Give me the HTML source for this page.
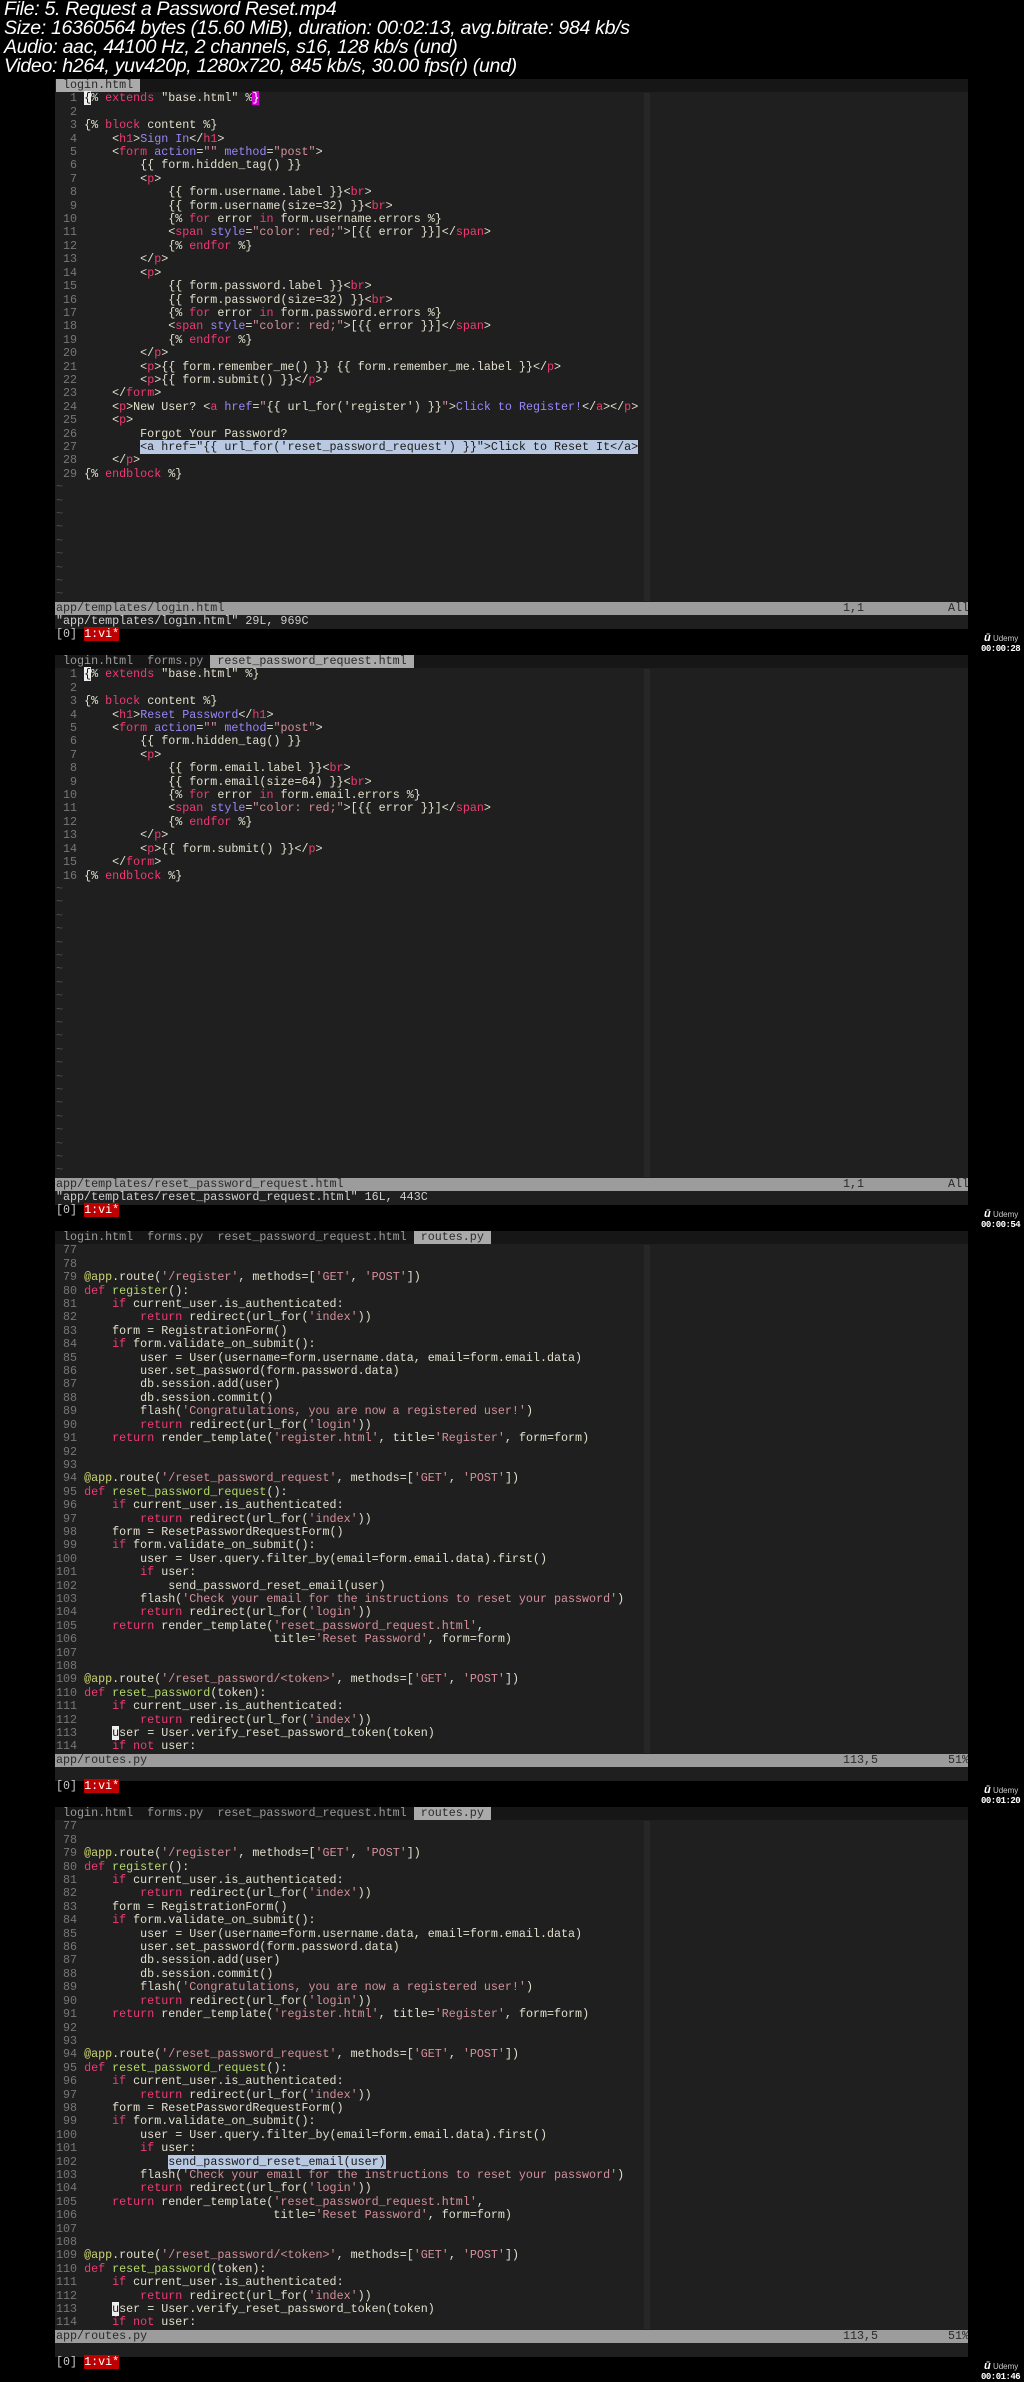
<!DOCTYPE html>
<html><head><meta charset="utf-8">
<style>
*{margin:0;padding:0;box-sizing:border-box}
body{width:1024px;height:2380px;background:#000;overflow:hidden;position:relative;font-family:"Liberation Mono",monospace}
.hdr{position:absolute;left:4px;top:0;color:#fff;font-family:"Liberation Sans",sans-serif;font-style:italic;font-size:19.5px;line-height:19px;letter-spacing:-0.3px}
.fr{position:absolute;left:0;width:1024px;height:576px}
.term{position:absolute;left:55px;top:3px;width:913px;height:550px;background:#1f1f1f;overflow:hidden}
.bar{position:absolute;left:589px;top:14px;width:6px;height:508px;background:#272727}
pre{position:absolute;left:1px;top:0;font-family:"Liberation Mono",monospace;font-size:11.7px;line-height:13.4px;color:#e2e0cc;white-space:pre}
.tabrow{position:absolute;left:0;top:0;width:913px;height:13.4px;background:#161616}
.st{position:absolute;left:0;top:522.6px;width:913px;height:13.4px;background:#9c9c9c}
.sr{position:absolute;top:522.6px;font-size:11.7px;line-height:13.4px;color:#2a2a2a;white-space:pre}
.ti{color:#9a9a9a}.ta{background:#aaa;color:#2a2a2a}
.l{color:#777}.k{color:#f03a74}.a{color:#9b86f8}.s{color:#d4909c}.g{color:#b4d86a}.y{color:#cdd470}.t{color:#4e4e4e}
.sttx{color:#2a2a2a}.msg{color:#d0d0d0}
.cur{background:#eee;color:#111}.mb{background:#d000d0;color:#fff}.hl{background:#b9c9e2;color:#1a1a1a}
.tm{position:absolute;left:56px;top:552px;font-size:11.7px;line-height:13.4px;color:#ccc}
.tm b{background:#c00000;color:#fff;font-weight:normal}
.ts{position:absolute;left:981px;top:568px;color:#fff;font-size:9px;font-weight:bold;font-family:"Liberation Mono",monospace;letter-spacing:-0.5px}
.ud{position:absolute;left:984px;top:556px;color:#ccc;font-size:8px;font-family:"Liberation Sans",sans-serif}
.ud i{font-size:11px;color:#fff;font-weight:bold}
</style></head><body>
<div class="hdr">File: 5. Request a Password Reset.mp4<br>Size: 16360564 bytes (15.60 MiB), duration: 00:02:13, avg.bitrate: 984 kb/s<br>Audio: aac, 44100 Hz, 2 channels, s16, 128 kb/s (und)<br>Video: h264, yuv420p, 1280x720, 845 kb/s, 30.00 fps(r) (und)</div>

<!-- FRAME 1 -->
<div class="fr" style="top:76px">
<div class="term"><div class="tabrow"></div><div class="bar"></div><div class="st"></div>
<div class="sr" style="left:788px">1,1</div><div class="sr" style="left:893px">All</div>
<pre><span class="ta"> login.html </span>
<span class="l">  1 </span><span class="cur">{</span>% <span class="k">extends</span> "base.html" %<span class="mb">}</span>
<span class="l">  2 </span>
<span class="l">  3 </span>{% <span class="k">block</span> content %}
<span class="l">  4 </span>    &lt;<span class="k">h1</span>&gt;<span class="a">Sign In</span>&lt;/<span class="k">h1</span>&gt;
<span class="l">  5 </span>    &lt;<span class="k">form</span> <span class="a">action</span>=<span class="s">""</span> <span class="a">method</span>=<span class="s">"post"</span>&gt;
<span class="l">  6 </span>        {{ form.hidden_tag() }}
<span class="l">  7 </span>        &lt;<span class="k">p</span>&gt;
<span class="l">  8 </span>            {{ form.username.label }}&lt;<span class="k">br</span>&gt;
<span class="l">  9 </span>            {{ form.username(size=32) }}&lt;<span class="k">br</span>&gt;
<span class="l"> 10 </span>            {% <span class="k">for</span> error <span class="k">in</span> form.username.errors %}
<span class="l"> 11 </span>            &lt;<span class="k">span</span> <span class="a">style</span>=<span class="s">"color: red;"</span>&gt;[{{ error }}]&lt;/<span class="k">span</span>&gt;
<span class="l"> 12 </span>            {% <span class="k">endfor</span> %}
<span class="l"> 13 </span>        &lt;/<span class="k">p</span>&gt;
<span class="l"> 14 </span>        &lt;<span class="k">p</span>&gt;
<span class="l"> 15 </span>            {{ form.password.label }}&lt;<span class="k">br</span>&gt;
<span class="l"> 16 </span>            {{ form.password(size=32) }}&lt;<span class="k">br</span>&gt;
<span class="l"> 17 </span>            {% <span class="k">for</span> error <span class="k">in</span> form.password.errors %}
<span class="l"> 18 </span>            &lt;<span class="k">span</span> <span class="a">style</span>=<span class="s">"color: red;"</span>&gt;[{{ error }}]&lt;/<span class="k">span</span>&gt;
<span class="l"> 19 </span>            {% <span class="k">endfor</span> %}
<span class="l"> 20 </span>        &lt;/<span class="k">p</span>&gt;
<span class="l"> 21 </span>        &lt;<span class="k">p</span>&gt;{{ form.remember_me() }} {{ form.remember_me.label }}&lt;/<span class="k">p</span>&gt;
<span class="l"> 22 </span>        &lt;<span class="k">p</span>&gt;{{ form.submit() }}&lt;/<span class="k">p</span>&gt;
<span class="l"> 23 </span>    &lt;/<span class="k">form</span>&gt;
<span class="l"> 24 </span>    &lt;<span class="k">p</span>&gt;New User? &lt;<span class="k">a</span> <span class="a">href</span>=<span class="s">"</span>{{ url_for('register') }}<span class="s">"</span>&gt;<span class="a">Click to Register!</span>&lt;/<span class="k">a</span>&gt;&lt;/<span class="k">p</span>&gt;
<span class="l"> 25 </span>    &lt;<span class="k">p</span>&gt;
<span class="l"> 26 </span>        Forgot Your Password?
<span class="l"> 27 </span>        <span class="hl">&lt;a href="{{ url_for('reset_password_request') }}"&gt;Click to Reset It&lt;/a&gt;</span>
<span class="l"> 28 </span>    &lt;/<span class="k">p</span>&gt;
<span class="l"> 29 </span>{% <span class="k">endblock</span> %}
<span class="t">~</span>
<span class="t">~</span>
<span class="t">~</span>
<span class="t">~</span>
<span class="t">~</span>
<span class="t">~</span>
<span class="t">~</span>
<span class="t">~</span>
<span class="t">~</span>
<span class="sttx">app/templates/login.html</span>
<span class="msg">"app/templates/login.html" 29L, 969C</span></pre></div>
<div class="tm">[0] <b>1:vi*</b></div>
<div class="ud"><i>ū</i> Udemy</div><div class="ts">00:00:28</div>
</div>

<!-- FRAME 2 -->
<div class="fr" style="top:652px">
<div class="term"><div class="tabrow"></div><div class="bar"></div><div class="st"></div>
<div class="sr" style="left:788px">1,1</div><div class="sr" style="left:893px">All</div>
<pre><span class="ti"> login.html  forms.py </span><span class="ta"> reset_password_request.html </span>
<span class="l">  1 </span><span class="cur">{</span>% <span class="k">extends</span> "base.html" %}
<span class="l">  2 </span>
<span class="l">  3 </span>{% <span class="k">block</span> content %}
<span class="l">  4 </span>    &lt;<span class="k">h1</span>&gt;<span class="a">Reset Password</span>&lt;/<span class="k">h1</span>&gt;
<span class="l">  5 </span>    &lt;<span class="k">form</span> <span class="a">action</span>=<span class="s">""</span> <span class="a">method</span>=<span class="s">"post"</span>&gt;
<span class="l">  6 </span>        {{ form.hidden_tag() }}
<span class="l">  7 </span>        &lt;<span class="k">p</span>&gt;
<span class="l">  8 </span>            {{ form.email.label }}&lt;<span class="k">br</span>&gt;
<span class="l">  9 </span>            {{ form.email(size=64) }}&lt;<span class="k">br</span>&gt;
<span class="l"> 10 </span>            {% <span class="k">for</span> error <span class="k">in</span> form.email.errors %}
<span class="l"> 11 </span>            &lt;<span class="k">span</span> <span class="a">style</span>=<span class="s">"color: red;"</span>&gt;[{{ error }}]&lt;/<span class="k">span</span>&gt;
<span class="l"> 12 </span>            {% <span class="k">endfor</span> %}
<span class="l"> 13 </span>        &lt;/<span class="k">p</span>&gt;
<span class="l"> 14 </span>        &lt;<span class="k">p</span>&gt;{{ form.submit() }}&lt;/<span class="k">p</span>&gt;
<span class="l"> 15 </span>    &lt;/<span class="k">form</span>&gt;
<span class="l"> 16 </span>{% <span class="k">endblock</span> %}
<span class="t">~</span>
<span class="t">~</span>
<span class="t">~</span>
<span class="t">~</span>
<span class="t">~</span>
<span class="t">~</span>
<span class="t">~</span>
<span class="t">~</span>
<span class="t">~</span>
<span class="t">~</span>
<span class="t">~</span>
<span class="t">~</span>
<span class="t">~</span>
<span class="t">~</span>
<span class="t">~</span>
<span class="t">~</span>
<span class="t">~</span>
<span class="t">~</span>
<span class="t">~</span>
<span class="t">~</span>
<span class="t">~</span>
<span class="t">~</span>
<span class="sttx">app/templates/reset_password_request.html</span>
<span class="msg">"app/templates/reset_password_request.html" 16L, 443C</span></pre></div>
<div class="tm">[0] <b>1:vi*</b></div>
<div class="ud"><i>ū</i> Udemy</div><div class="ts">00:00:54</div>
</div>

<!-- FRAME 3 -->
<div class="fr" style="top:1228px">
<div class="term"><div class="tabrow"></div><div class="bar"></div><div class="st"></div>
<div class="sr" style="left:788px">113,5</div><div class="sr" style="left:893px">51%</div>
<pre><span class="ti"> login.html  forms.py  reset_password_request.html </span><span class="ta"> routes.py </span>
<span class="l"> 77 </span>
<span class="l"> 78 </span>
<span class="l"> 79 </span><span class="y">@app</span>.route(<span class="s">'/register'</span>, methods=[<span class="s">'GET'</span>, <span class="s">'POST'</span>])
<span class="l"> 80 </span><span class="k">def</span> <span class="g">register</span>():
<span class="l"> 81 </span>    <span class="k">if</span> current_user.is_authenticated:
<span class="l"> 82 </span>        <span class="k">return</span> redirect(url_for(<span class="s">'index'</span>))
<span class="l"> 83 </span>    form = RegistrationForm()
<span class="l"> 84 </span>    <span class="k">if</span> form.validate_on_submit():
<span class="l"> 85 </span>        user = User(username=form.username.data, email=form.email.data)
<span class="l"> 86 </span>        user.set_password(form.password.data)
<span class="l"> 87 </span>        db.session.add(user)
<span class="l"> 88 </span>        db.session.commit()
<span class="l"> 89 </span>        flash(<span class="s">'Congratulations, you are now a registered user!'</span>)
<span class="l"> 90 </span>        <span class="k">return</span> redirect(url_for(<span class="s">'login'</span>))
<span class="l"> 91 </span>    <span class="k">return</span> render_template(<span class="s">'register.html'</span>, title=<span class="s">'Register'</span>, form=form)
<span class="l"> 92 </span>
<span class="l"> 93 </span>
<span class="l"> 94 </span><span class="y">@app</span>.route(<span class="s">'/reset_password_request'</span>, methods=[<span class="s">'GET'</span>, <span class="s">'POST'</span>])
<span class="l"> 95 </span><span class="k">def</span> <span class="g">reset_password_request</span>():
<span class="l"> 96 </span>    <span class="k">if</span> current_user.is_authenticated:
<span class="l"> 97 </span>        <span class="k">return</span> redirect(url_for(<span class="s">'index'</span>))
<span class="l"> 98 </span>    form = ResetPasswordRequestForm()
<span class="l"> 99 </span>    <span class="k">if</span> form.validate_on_submit():
<span class="l">100 </span>        user = User.query.filter_by(email=form.email.data).first()
<span class="l">101 </span>        <span class="k">if</span> user:
<span class="l">102 </span>            send_password_reset_email(user)
<span class="l">103 </span>        flash(<span class="s">'Check your email for the instructions to reset your password'</span>)
<span class="l">104 </span>        <span class="k">return</span> redirect(url_for(<span class="s">'login'</span>))
<span class="l">105 </span>    <span class="k">return</span> render_template(<span class="s">'reset_password_request.html'</span>,
<span class="l">106 </span>                           title=<span class="s">'Reset Password'</span>, form=form)
<span class="l">107 </span>
<span class="l">108 </span>
<span class="l">109 </span><span class="y">@app</span>.route(<span class="s">'/reset_password/&lt;token&gt;'</span>, methods=[<span class="s">'GET'</span>, <span class="s">'POST'</span>])
<span class="l">110 </span><span class="k">def</span> <span class="g">reset_password</span>(token):
<span class="l">111 </span>    <span class="k">if</span> current_user.is_authenticated:
<span class="l">112 </span>        <span class="k">return</span> redirect(url_for(<span class="s">'index'</span>))
<span class="l">113 </span>    <span class="cur">u</span>ser = User.verify_reset_password_token(token)
<span class="l">114 </span>    <span class="k">if not</span> user:
<span class="sttx">app/routes.py</span>
</pre></div>
<div class="tm">[0] <b>1:vi*</b></div>
<div class="ud"><i>ū</i> Udemy</div><div class="ts">00:01:20</div>
</div>

<!-- FRAME 4 -->
<div class="fr" style="top:1804px">
<div class="term"><div class="tabrow"></div><div class="bar"></div><div class="st"></div>
<div class="sr" style="left:788px">113,5</div><div class="sr" style="left:893px">51%</div>
<pre><span class="ti"> login.html  forms.py  reset_password_request.html </span><span class="ta"> routes.py </span>
<span class="l"> 77 </span>
<span class="l"> 78 </span>
<span class="l"> 79 </span><span class="y">@app</span>.route(<span class="s">'/register'</span>, methods=[<span class="s">'GET'</span>, <span class="s">'POST'</span>])
<span class="l"> 80 </span><span class="k">def</span> <span class="g">register</span>():
<span class="l"> 81 </span>    <span class="k">if</span> current_user.is_authenticated:
<span class="l"> 82 </span>        <span class="k">return</span> redirect(url_for(<span class="s">'index'</span>))
<span class="l"> 83 </span>    form = RegistrationForm()
<span class="l"> 84 </span>    <span class="k">if</span> form.validate_on_submit():
<span class="l"> 85 </span>        user = User(username=form.username.data, email=form.email.data)
<span class="l"> 86 </span>        user.set_password(form.password.data)
<span class="l"> 87 </span>        db.session.add(user)
<span class="l"> 88 </span>        db.session.commit()
<span class="l"> 89 </span>        flash(<span class="s">'Congratulations, you are now a registered user!'</span>)
<span class="l"> 90 </span>        <span class="k">return</span> redirect(url_for(<span class="s">'login'</span>))
<span class="l"> 91 </span>    <span class="k">return</span> render_template(<span class="s">'register.html'</span>, title=<span class="s">'Register'</span>, form=form)
<span class="l"> 92 </span>
<span class="l"> 93 </span>
<span class="l"> 94 </span><span class="y">@app</span>.route(<span class="s">'/reset_password_request'</span>, methods=[<span class="s">'GET'</span>, <span class="s">'POST'</span>])
<span class="l"> 95 </span><span class="k">def</span> <span class="g">reset_password_request</span>():
<span class="l"> 96 </span>    <span class="k">if</span> current_user.is_authenticated:
<span class="l"> 97 </span>        <span class="k">return</span> redirect(url_for(<span class="s">'index'</span>))
<span class="l"> 98 </span>    form = ResetPasswordRequestForm()
<span class="l"> 99 </span>    <span class="k">if</span> form.validate_on_submit():
<span class="l">100 </span>        user = User.query.filter_by(email=form.email.data).first()
<span class="l">101 </span>        <span class="k">if</span> user:
<span class="l">102 </span>            <span class="hl">send_password_reset_email(user)</span>
<span class="l">103 </span>        flash(<span class="s">'Check your email for the instructions to reset your password'</span>)
<span class="l">104 </span>        <span class="k">return</span> redirect(url_for(<span class="s">'login'</span>))
<span class="l">105 </span>    <span class="k">return</span> render_template(<span class="s">'reset_password_request.html'</span>,
<span class="l">106 </span>                           title=<span class="s">'Reset Password'</span>, form=form)
<span class="l">107 </span>
<span class="l">108 </span>
<span class="l">109 </span><span class="y">@app</span>.route(<span class="s">'/reset_password/&lt;token&gt;'</span>, methods=[<span class="s">'GET'</span>, <span class="s">'POST'</span>])
<span class="l">110 </span><span class="k">def</span> <span class="g">reset_password</span>(token):
<span class="l">111 </span>    <span class="k">if</span> current_user.is_authenticated:
<span class="l">112 </span>        <span class="k">return</span> redirect(url_for(<span class="s">'index'</span>))
<span class="l">113 </span>    <span class="cur">u</span>ser = User.verify_reset_password_token(token)
<span class="l">114 </span>    <span class="k">if not</span> user:
<span class="sttx">app/routes.py</span>
</pre></div>
<div class="tm">[0] <b>1:vi*</b></div>
<div class="ud"><i>ū</i> Udemy</div><div class="ts">00:01:46</div>
</div>
</body></html>
